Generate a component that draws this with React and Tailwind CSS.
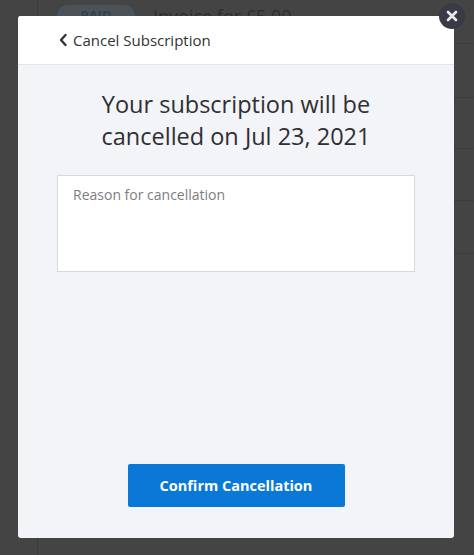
import React from "react";

export default function App() {
  const rows = [43, 97, 148, 200, 253];
  return (
    <div className="relative w-[474px] h-[555px] overflow-hidden bg-[#444444]" style={{ fontFamily: '"Open Sans", "Noto Sans", sans-serif' }}>
      {/* dimmed background page */}
      <div className="absolute left-[37px] top-0 h-full w-px bg-[#3a3a3a]" />
      {rows.map((y) => (
        <div key={y} className="absolute left-[37px] right-0 h-px bg-[#3c3c3c]" style={{ top: y }} />
      ))}
      <div className="absolute left-[57px] top-[5px] flex h-[22px] w-[78px] items-center justify-center rounded-full bg-[#4b5358] text-[13px] font-bold text-[#34404a]">
        PAID
      </div>
      <div className="absolute left-[153px] top-[3px] text-[18px] text-[#2e2e2e]">Invoice for £5.00</div>

      {/* modal */}
      <div className="absolute left-[18px] top-[16px] flex h-[522px] w-[436px] flex-col overflow-hidden rounded-[3px] bg-[#f3f4f8]">
        <div className="flex h-[49px] items-center border-b border-[#e3e5ea] bg-white pl-[40px] text-[15px] text-[#333333]">
          <svg width="10" height="14" viewBox="0 0 10 14" className="mr-[5px]">
            <path d="M7.5 2 L3 7 L7.5 12" fill="none" stroke="#333" strokeWidth="2.4" strokeLinecap="round" strokeLinejoin="round" />
          </svg>
          <span>Cancel Subscription</span>
        </div>
        <div className="flex flex-1 flex-col items-center px-[39px] pt-[23px] pb-[31px]">
          <h1 className="text-center text-[23.5px] leading-[32px] text-[#2f2f33]">
            Your subscription will be
            <br />
            cancelled on Jul 23, 2021
          </h1>
          <div className="mt-[23px] h-[97px] w-full border border-[#d8d9dd] bg-white px-[15px] pt-[8px] text-[14px] text-[#7d7d82]">
            Reason for cancellation
          </div>
          <div className="flex-1" />
          <button className="h-[43px] w-[217px] rounded-[2px] bg-[#0a78d6] text-[14.5px] font-bold text-white">
            Confirm Cancellation
          </button>
        </div>
      </div>

      {/* close button */}
      <div className="absolute left-[439px] top-[3px] flex h-[26px] w-[26px] items-center justify-center rounded-full bg-[#3a3a44]">
        <svg width="12" height="12" viewBox="0 0 12 12">
          <path d="M2 2 L10 10 M10 2 L2 10" stroke="#e8e8ee" strokeWidth="2.6" strokeLinecap="round" />
        </svg>
      </div>
    </div>
  );
}
